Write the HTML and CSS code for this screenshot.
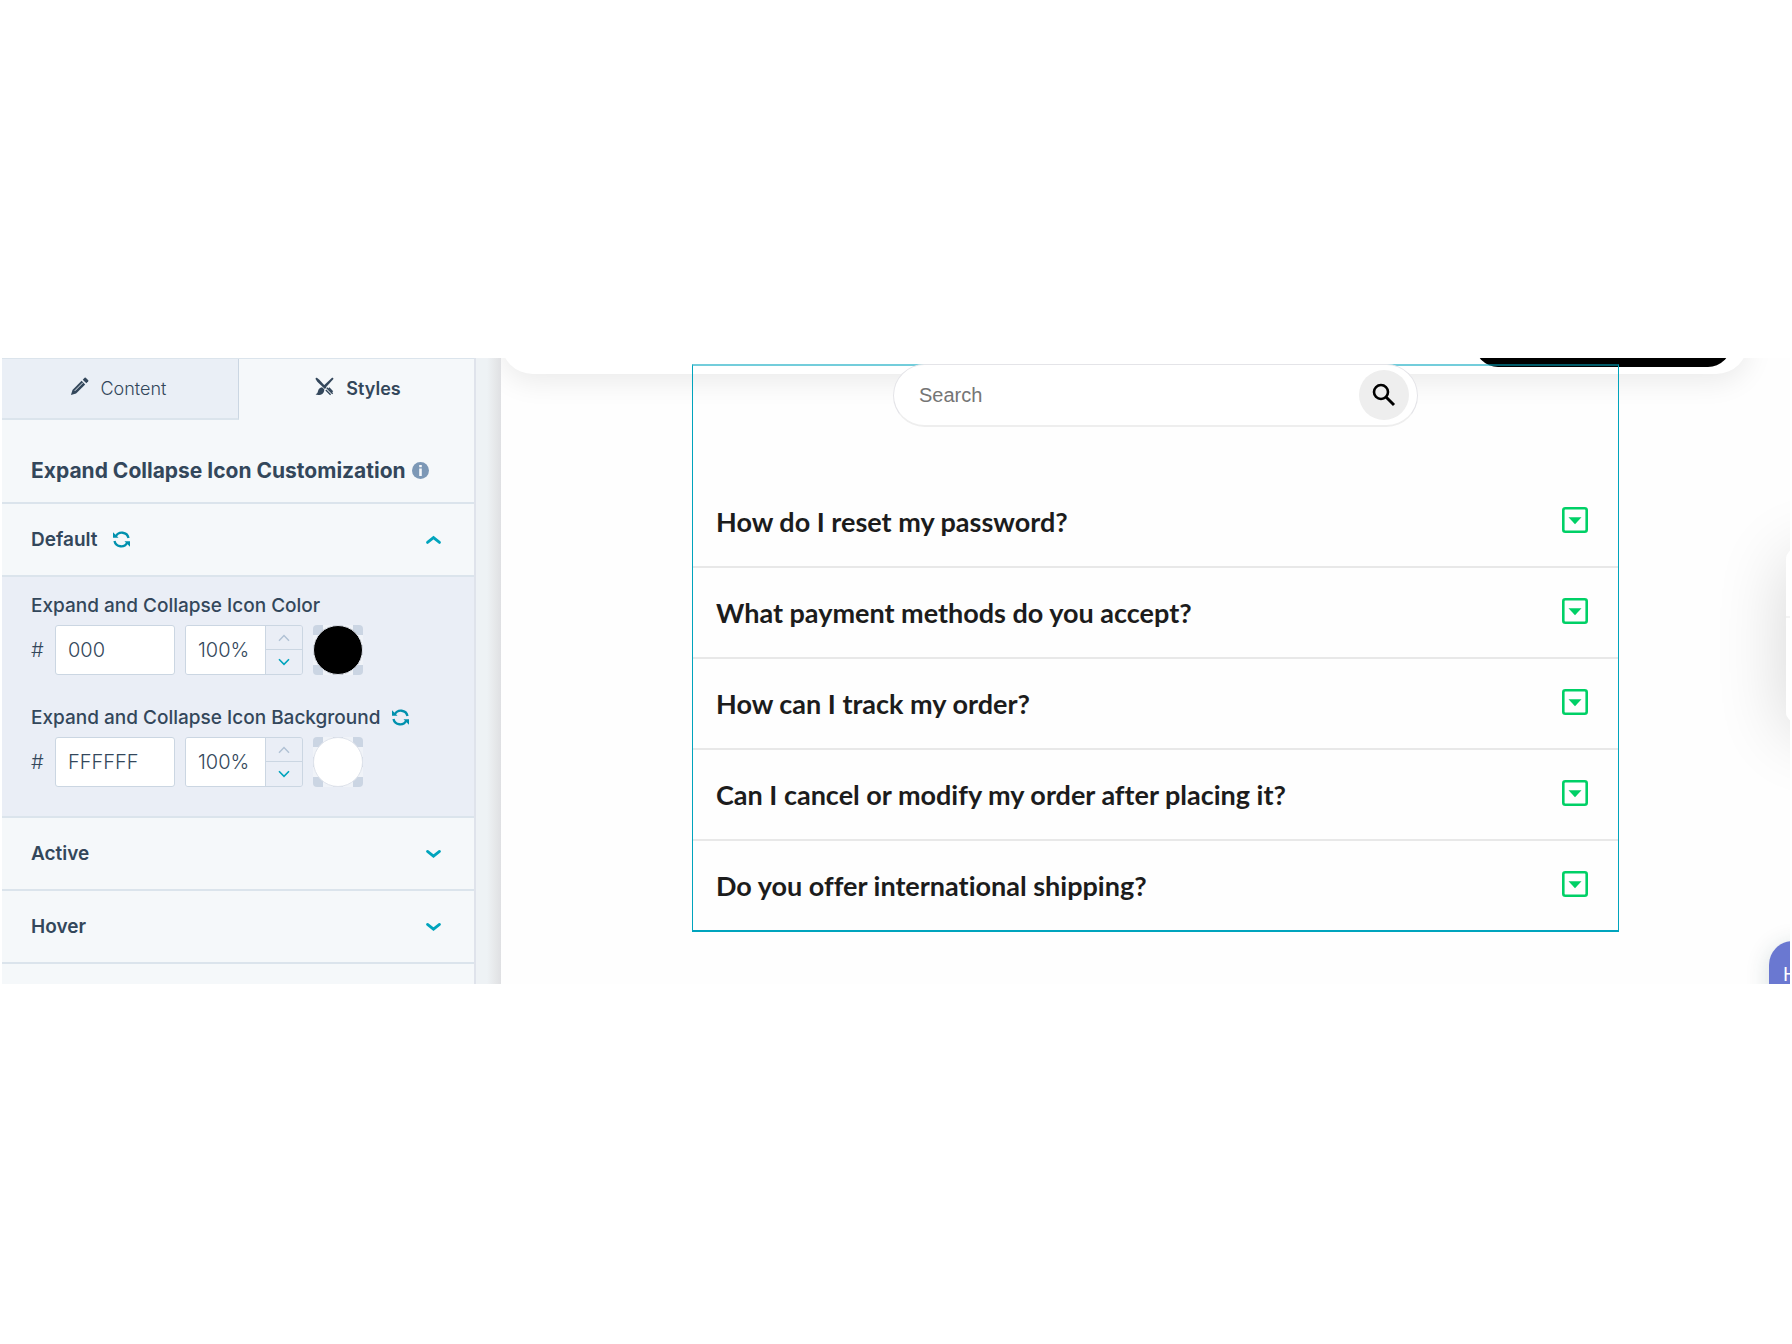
FILE: index.html
```html
<!DOCTYPE html>
<html lang="en">
<head>
<meta charset="utf-8">
<title>FAQ module styles</title>
<link rel="stylesheet" href="styles.css">
</head>
<body>
<svg class="sprite" aria-hidden="true">
  <symbol id="refresh" viewBox="0 0 16 16">
    <path d="M2.6 5.2A6.4 6.4 0 0 1 14.6 6.6M13.4 10.8A6.4 6.4 0 0 1 1.4 9.4" fill="none" stroke="currentColor" stroke-width="2.2"/>
    <path d="M0 1.2V6.4H5.2ZM16 14.8V9.6H10.8Z" fill="currentColor"/>
  </symbol>
  <symbol id="chevron-down" viewBox="0 0 16 10">
    <path d="M2 2.4L8 7.2L14 2.4" fill="none" stroke="currentColor" stroke-width="2.8" stroke-linecap="round"/>
  </symbol>
  <symbol id="chevron-up" viewBox="0 0 16 10">
    <path d="M2 7.4L8 2.6L14 7.4" fill="none" stroke="currentColor" stroke-width="2.8" stroke-linecap="round"/>
  </symbol>
  <symbol id="step-up" viewBox="0 0 12 8">
    <path d="M1 6.8L6 1.6L11 6.8" fill="none" stroke="currentColor" stroke-width="1.4"/>
  </symbol>
  <symbol id="step-down" viewBox="0 0 12 8">
    <path d="M1 1.2L6 6.4L11 1.2" fill="none" stroke="currentColor" stroke-width="1.6"/>
  </symbol>
  <symbol id="toggle" viewBox="0 0 26 26">
    <rect x="1.3" y="1.3" width="23.4" height="23.4" rx="2" fill="none" stroke="currentColor" stroke-width="2.6"/>
    <path d="M6.5 10.2H19.5L13 17.2Z" fill="currentColor"/>
  </symbol>
</svg>
<div class="editor">
  <aside class="sidebar">
    <div class="panel">
      <nav class="tabs">
        <button class="tab" type="button">
          <svg class="tab-icon" viewBox="0 0 20 20"><path d="M1 19L2.6 13.6L12.2 4L16 7.8L6.4 17.4Z" fill="currentColor"/><path d="M13.4 2.8L15.4 .8Q16 .4 16.6 .8L19.2 3.4Q19.6 4 19.2 4.6L17.2 6.6Z" fill="currentColor"/><path d="M5 14.6L13.6 6" stroke="#eaeff6" stroke-width="1"/></svg>
          Content
        </button>
        <button class="tab tab-active" type="button">
          <svg class="tab-icon" viewBox="0 0 20 20"><path d="M.6 2Q.4 .6 2 .8L4.6 3L12 11L10.4 12.6L2.4 5Z" fill="currentColor"/><path d="M18.2 .4L19.6 1.8L10.6 11.8L8.4 9.8Z" fill="currentColor"/><path d="M7.4 10.8L9.8 13Q9.8 17.6 6 18.6Q3 19.2 .6 18.4Q3 17.6 3.2 14.8Q4 11.4 7.4 10.8Z" fill="currentColor"/><path d="M12.4 11.4L18.6 17.6M14.6 11.4L18.6 15.4M11.4 13.6L16.4 18.6" stroke="currentColor" stroke-width="1.5"/></svg>
          Styles
        </button>
      </nav>
      <h2 class="title">Expand Collapse Icon Customization
        <svg class="info" viewBox="0 0 17 17"><circle cx="8.5" cy="8.5" r="8.5" fill="#7c98b6"/><path d="M7.2 3H9.8V5.2H7.2ZM7.2 6.6H9.8V14H7.2Z" fill="#f5f8fa"/></svg>
      </h2>
      <div class="section">
        <span>Default</span>
        <button class="icon-button" type="button" aria-label="Reset default"><svg class="refresh"><use href="#refresh"/></svg></button>
        <button class="icon-button section-toggle" type="button" aria-label="Collapse"><svg class="chevron"><use href="#chevron-up"/></svg></button>
      </div>
      <div class="fields">
        <div class="field">
          <div class="field-label"><label for="color">Expand and Collapse Icon Color</label></div>
          <div class="controls">
            <span class="hash">#</span>
            <input class="hex" id="color" type="text" value="000">
            <div class="stepper">
              <input class="percent" type="text" value="100%" aria-label="Icon color opacity">
              <div class="steps">
                <button class="step step-off" type="button" aria-label="Increase"><svg class="caret"><use href="#step-up"/></svg></button>
                <button class="step" type="button" aria-label="Decrease"><svg class="caret"><use href="#step-down"/></svg></button>
              </div>
            </div>
            <button class="swatch" type="button" aria-label="Pick icon color"><span class="dot dot-black"></span></button>
          </div>
        </div>
        <div class="field">
          <div class="field-label"><label for="background">Expand and Collapse Icon Background</label>
            <button class="icon-button" type="button" aria-label="Reset background"><svg class="refresh"><use href="#refresh"/></svg></button>
          </div>
          <div class="controls">
            <span class="hash">#</span>
            <input class="hex" id="background" type="text" value="FFFFFF">
            <div class="stepper">
              <input class="percent" type="text" value="100%" aria-label="Icon background opacity">
              <div class="steps">
                <button class="step step-off" type="button" aria-label="Increase"><svg class="caret"><use href="#step-up"/></svg></button>
                <button class="step" type="button" aria-label="Decrease"><svg class="caret"><use href="#step-down"/></svg></button>
              </div>
            </div>
            <button class="swatch" type="button" aria-label="Pick background color"><span class="dot"></span></button>
          </div>
        </div>
      </div>
      <div class="section">
        <span>Active</span>
        <button class="icon-button section-toggle" type="button" aria-label="Expand"><svg class="chevron"><use href="#chevron-down"/></svg></button>
      </div>
      <div class="section">
        <span>Hover</span>
        <button class="icon-button section-toggle" type="button" aria-label="Expand"><svg class="chevron"><use href="#chevron-down"/></svg></button>
      </div>
      <div class="section-peek"></div>
    </div>
  </aside>
  <main class="preview">
    <div class="site-header"><div class="site-cta"></div></div>
    <section class="faq">
      <form class="search">
        <input class="search-input" type="search" placeholder="Search" aria-label="Search">
        <button class="search-button" type="button" aria-label="Search">
          <svg class="search-icon" viewBox="0 0 24 24"><circle cx="9" cy="9" r="7" fill="none" stroke="#000" stroke-width="2.6"/><path d="M14 14L22 22" stroke="#000" stroke-width="3"/></svg>
        </button>
      </form>
      <button class="question" type="button">How do I reset my password?<svg class="toggle"><use href="#toggle"/></svg></button>
      <button class="question" type="button">What payment methods do you accept?<svg class="toggle"><use href="#toggle"/></svg></button>
      <button class="question" type="button">How can I track my order?<svg class="toggle"><use href="#toggle"/></svg></button>
      <button class="question" type="button">Can I cancel or modify my order after placing it?<svg class="toggle"><use href="#toggle"/></svg></button>
      <button class="question" type="button">Do you offer international shipping?<svg class="toggle"><use href="#toggle"/></svg></button>
    </section>
    <div class="popover"></div>
    <button class="help" type="button">H</button>
  </main>
</div>
</body>
</html>
```

FILE: styles.css
```css
* {
  box-sizing: border-box;
}

body {
  margin: 0;
  min-height: 100vh;
  padding: 0 2px 2px;
  display: grid;
  align-content: center;
  background: #fff;
  color: #33475b;
  font-family: Inter, "Liberation Sans", sans-serif;
}

button {
  margin: 0;
  padding: 0;
  border: 0;
  background: none;
  color: inherit;
  font: inherit;
}

input {
  min-width: 0;
  margin: 0;
  color: inherit;
  font: inherit;
}

svg {
  display: block;
  flex: none;
}

.sprite {
  position: absolute;
  width: 0;
  height: 0;
}

.editor {
  display: flex;
  overflow: hidden;
}

/* Sidebar */
.sidebar {
  flex: none;
  width: 499px;
  padding-right: 25px;
  background: linear-gradient(to left, #dfe0e3, #e6e8ea 6px, #eef2f5 14px);
}

.panel {
  border-right: 2px solid #dfe3eb;
  background: #f5f8fa;
}

.tabs {
  display: grid;
  grid-template-columns: 237px 1fr;
  height: 62px;
  border-top: 1px solid #dbe4ec;
}

.tab {
  display: flex;
  align-items: center;
  justify-content: center;
  gap: 12px;
  padding-right: 4px;
  border-right: 1px solid #cbd6e2;
  border-bottom: 2px solid #dbe4ec;
  background: #eaeff6;
  font-size: 18px;
  font-weight: 300;
}

.tab-active {
  padding: 0 0 0 4px;
  border-color: transparent;
  background: none;
  font-weight: 600;
}

.tab-icon {
  width: 19px;
  height: 19px;
  margin-bottom: 4px;
}

.title {
  display: flex;
  align-items: center;
  gap: 6px;
  height: 84px;
  margin: 0;
  padding: 18px 29px 0;
  border-bottom: 2px solid #dbe4ec;
  font-size: 21px;
  font-weight: 700;
  white-space: nowrap;
}

.info {
  width: 17px;
  height: 17px;
}

.section {
  display: flex;
  align-items: center;
  gap: 15px;
  height: 73px;
  padding: 0 32px 0 29px;
  border-bottom: 2px solid #dbe4ec;
  font-size: 19px;
  font-weight: 600;
}

.icon-button {
  color: #0091ae;
}

.refresh {
  width: 17px;
  height: 17px;
}

.section-toggle {
  margin-left: auto;
  color: #00a4bd;
}

.chevron {
  width: 17px;
  height: 10px;
}

.section-peek {
  height: 20px;
}

.fields {
  display: grid;
  gap: 30px;
  padding: 16px 29px 29px;
  border-bottom: 2px solid #dbe4ec;
  background: #eaeef6;
}

.field {
  display: grid;
  gap: 8px;
}

.field-label {
  display: flex;
  align-items: center;
  gap: 12px;
  height: 24px;
  font-size: 19px;
  font-weight: 500;
  white-space: nowrap;
}

.controls {
  display: flex;
  align-items: center;
  gap: 10px;
  font-size: 20px;
  font-weight: 300;
}

.hash {
  width: 14px;
}

.hex {
  width: 120px;
  height: 50px;
  padding: 0 12px;
  border: 1px solid #cbd6e2;
  border-radius: 3px;
  background: #fff;
}

.stepper {
  display: flex;
  width: 118px;
  height: 50px;
  border: 1px solid #cbd6e2;
  border-radius: 3px;
  overflow: hidden;
}

.percent {
  flex: 1;
  padding: 0 0 0 12px;
  border: 0;
  background: #fff;
}

.steps {
  display: grid;
  grid-template-rows: 1fr 1fr;
  width: 37px;
  border-left: 1px solid #cbd6e2;
  background: #eaeef6;
}

.step {
  display: grid;
  place-items: center;
  color: #00a4bd;
}

.step-off {
  border-bottom: 1px solid #cbd6e2;
  color: #b0c1d4;
}

.caret {
  width: 12px;
  height: 8px;
}

.swatch {
  width: 50px;
  height: 50px;
  border-radius: 4px;
  background: repeating-conic-gradient(#f0f3f8 0 25%, #cbd5e3 0 50%) 0 0 / 20px 20px;
}

.dot {
  display: block;
  height: 50px;
  border: 1px solid #dfe3eb;
  border-radius: 50%;
  background: #fff;
}

.dot-black {
  background: #000;
}

/* Page preview */
.preview {
  position: relative;
  flex: 1;
  min-width: 0;
  padding: 6px 171px 0 191px;
  overflow: hidden;
  background: #fefefe;
}

.site-header {
  position: absolute;
  top: -64px;
  left: 0;
  right: 42px;
  height: 80px;
  border-radius: 32px;
  background: #fff;
  box-shadow: 0 8px 28px rgba(0, 0, 0, 0.08);
}

.site-cta {
  position: absolute;
  right: 17px;
  bottom: 7px;
  width: 256px;
  height: 46px;
  border-radius: 23px;
  background: #000;
}

.faq {
  position: relative;
  border: 1px solid #00a4bd;
  border-top: 2px solid rgba(0, 164, 189, 0.55);
  border-bottom-width: 2px;
}

.search {
  display: flex;
  align-items: center;
  width: 525px;
  height: 63px;
  margin: -2px auto 50px;
  padding: 0 8px 0 25px;
  border: 1px solid #e4e4e8;
  border-bottom: 2px solid #eee;
  border-radius: 32px;
  background: #fff;
}

.search-input {
  flex: 1;
  padding: 0;
  border: 0;
  background: none;
  font-family: "Liberation Sans", sans-serif;
  font-size: 20px;
}

.search-input::placeholder {
  color: #757575;
}

.search-button {
  display: grid;
  place-items: center;
  width: 50px;
  height: 50px;
  border-radius: 50%;
  background: #eee;
}

.search-icon {
  width: 24px;
  height: 24px;
}

.question {
  display: flex;
  align-items: center;
  justify-content: space-between;
  width: 100%;
  height: 91px;
  padding: 0 30px 0 23px;
  border-bottom: 2px solid #e8e8e8;
  color: #1c1c1c;
  font-family: Lato, sans-serif;
  font-size: 27px;
  font-weight: 700;
  font-variant-ligatures: none;
}

.question:last-child {
  height: 89px;
  border-bottom: 0;
}

.toggle {
  width: 26px;
  height: 26px;
  margin-bottom: 4px;
  color: #00d066;
}

.popover {
  position: absolute;
  top: 191px;
  right: -296px;
  width: 300px;
  height: 173px;
  border-radius: 10px;
  background: linear-gradient(#fff 67px, #f3f3f3 67px 69px, #fff 69px);
  box-shadow: 0 10px 70px rgba(0, 0, 0, 0.16);
}

.help {
  position: absolute;
  top: 583px;
  right: -59px;
  width: 80px;
  height: 66px;
  padding-left: 14px;
  border-radius: 24px;
  background: #6a78d1;
  box-shadow: 0 4px 24px rgba(0, 60, 60, 0.16);
  color: #fff;
  font-size: 19px;
  text-align: left;
}
```
